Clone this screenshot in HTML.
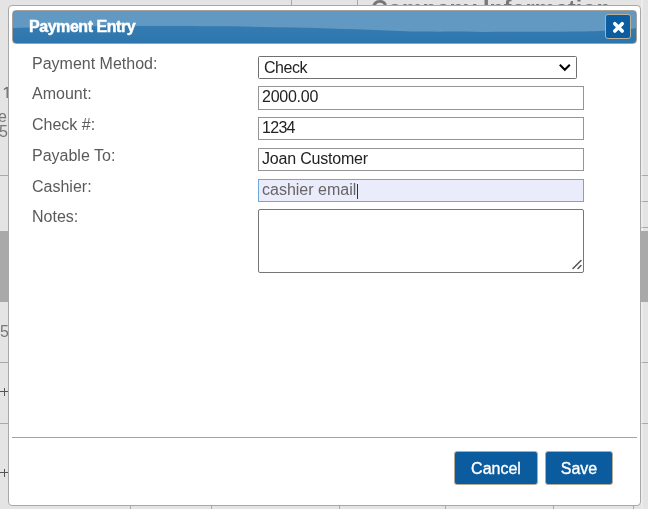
<!DOCTYPE html>
<html><head><meta charset="utf-8">
<style>
html,body{margin:0;padding:0;}
body{width:648px;height:509px;position:relative;overflow:hidden;background:#e4e4e4;font-family:"Liberation Sans",sans-serif;}
.abs{position:absolute;}
.hl{position:absolute;height:1px;background:#a9a9a9;}
.vl{position:absolute;width:1px;background:#a9a9a9;}
.bgt{position:absolute;color:#777;font-size:16px;line-height:16px;}
#dlg{position:absolute;left:8px;top:5px;width:631px;height:499px;border:1px solid #a8a8a8;border-radius:4px;background:#fff;}
#title{position:absolute;left:12px;top:10px;width:625px;height:34px;box-sizing:border-box;border:1px solid #a4a09c;border-radius:4px;overflow:hidden;background:linear-gradient(#3a80b4,#2d76ad);}
#title .t{position:absolute;left:16px;top:7px;font-size:16px;font-weight:bold;color:#fff;line-height:18px;letter-spacing:-0.45px;-webkit-text-stroke:0.45px #fff;}
#close{position:absolute;left:605px;top:14px;width:24px;height:23px;border:1px solid #bdb097;border-radius:3px;background:#0b5da1;}
.lbl{position:absolute;left:32px;font-size:16px;color:#5a5a5a;line-height:18px;}
.inp{position:absolute;left:258px;width:326px;border:1px solid #959595;background:#fff;box-sizing:border-box;font-size:16px;color:#222;}
.inp span{position:absolute;left:3px;line-height:18px;}
.btn{position:absolute;top:451px;height:34px;box-sizing:border-box;border:1px solid #b8ab95;border-radius:3px;background:#0b5c9f;color:#fff;font-weight:normal;font-size:16px;letter-spacing:0px;line-height:34px;text-align:center;-webkit-text-stroke:0.35px #fff;}
</style></head><body><div id="root" style="position:absolute;left:0;top:0;width:648px;height:509px;will-change:transform;">
<!-- background -->
<div class="bgt" style="left:371px;top:-3px;font-size:23.2px;font-weight:bold;color:#777;line-height:24px;">Company Information</div>
<div class="vl" style="left:357px;top:0;height:6px;"></div><div class="vl" style="left:291px;top:0;height:6px;"></div>
<div class="hl" style="left:0;top:175px;width:648px;"></div>
<div class="hl" style="left:640px;top:201px;width:8px;"></div>
<div class="hl" style="left:640px;top:227px;width:8px;"></div>
<div class="abs" style="left:0;top:231px;width:648px;height:71px;background:#a9a9a9;"></div>
<div class="hl" style="left:0;top:362px;width:648px;"></div>
<div class="hl" style="left:0;top:423px;width:648px;"></div>
<div class="vl" style="left:130px;top:500px;height:9px;"></div>
<div class="vl" style="left:211px;top:500px;height:9px;"></div>
<div class="vl" style="left:339px;top:500px;height:9px;"></div>
<div class="vl" style="left:445px;top:500px;height:9px;"></div>
<div class="vl" style="left:553px;top:500px;height:9px;"></div>
<div class="vl" style="left:633px;top:500px;height:9px;"></div>
<svg class="abs" style="left:0;top:84px" width="8" height="16"><path d="M7.2 3 V14 M7.2 3.2 L4 5.6" stroke="#6a6a6a" stroke-width="1.3" fill="none"/></svg>
<div class="bgt" style="left:-2px;top:109px;">e</div>
<div class="bgt" style="left:-1px;top:124px;">5</div>
<div class="bgt" style="left:0px;top:324px;">5</div>
<div class="abs" style="left:4px;top:388px;width:1px;height:8px;background:#555;"></div>
<div class="abs" style="left:0px;top:391px;width:8px;height:1px;background:#555;"></div>
<div class="abs" style="left:4px;top:469px;width:1px;height:8px;background:#555;"></div>
<div class="abs" style="left:0px;top:472px;width:8px;height:1px;background:#555;"></div>
<div class="abs" style="left:641px;top:0;width:2px;height:231px;background:rgba(255,255,255,0.3);"></div><div class="abs" style="left:641px;top:302px;width:2px;height:207px;background:rgba(255,255,255,0.3);"></div>
<div id="dlg"></div>
<div id="title">
<svg class="abs" style="left:-1px;top:-1px" width="625" height="34"><path d="M0 0 H625 V18 C610 20 595 21 560 21.5 C500 22 440 22 400 21.5 C340 19 280 17 200 16.3 C150 15.8 60 16 0 18 Z" fill="#6199c3"/></svg>
<div class="t">Payment Entry</div>
</div>
<div id="close"><svg class="abs" style="left:0;top:0" width="24" height="23"><path d="M8.8 8.7 L16.2 16.1 M16.2 8.7 L8.8 16.1" stroke="#fff" stroke-width="3.6" stroke-linecap="round"/></svg></div>

<div class="lbl" style="top:55px;">Payment Method:</div>
<div class="lbl" style="top:85px;">Amount:</div>
<div class="lbl" style="top:116px;">Check #:</div>
<div class="lbl" style="top:147px;">Payable To:</div>
<div class="lbl" style="top:178px;">Cashier:</div>
<div class="lbl" style="top:208px;">Notes:</div>

<div class="inp" style="top:56px;height:23px;width:319px;border-color:#707070;border-radius:1.5px;"><span style="left:5px;top:2px;letter-spacing:-0.45px;">Check</span>
<svg class="abs" style="left:299px;top:6px" width="14" height="9"><path d="M1.8 1.8 L6.8 6.8 L11.8 1.8" stroke="#000" stroke-width="2" fill="none"/></svg></div>
<div class="inp" style="top:86px;height:24px;"><span style="top:1px;letter-spacing:-0.25px;">2000.00</span></div>
<div class="inp" style="top:117px;height:23px;"><span style="top:1px;letter-spacing:-0.7px;">1234</span></div>
<div class="inp" style="top:148px;height:23px;"><span style="top:1px;letter-spacing:-0.2px;">Joan Customer</span></div>
<div class="inp" style="top:179px;height:23px;background:#eaebfb;border-color:#6fa8d8;color:#666;"><span style="top:1px;">cashier email</span><div class="abs" style="left:98px;top:4px;width:1px;height:15px;background:#333;"></div></div>
<div class="inp" style="top:209px;height:64px;border-color:#767676;border-radius:2px;">
<svg class="abs" style="left:310px;top:48px" width="14" height="14"><path d="M4 10.5 L12 2.5 M9 10.5 L12 7.5" stroke="#555" stroke-width="1.5" stroke-linecap="round"/></svg></div>

<div class="hl" style="left:12px;top:437px;width:625px;background:#a3a3a3;"></div>
<div class="btn" style="left:454px;width:84px;">Cancel</div>
<div class="btn" style="left:545px;width:68px;">Save</div>
</div></body></html>
